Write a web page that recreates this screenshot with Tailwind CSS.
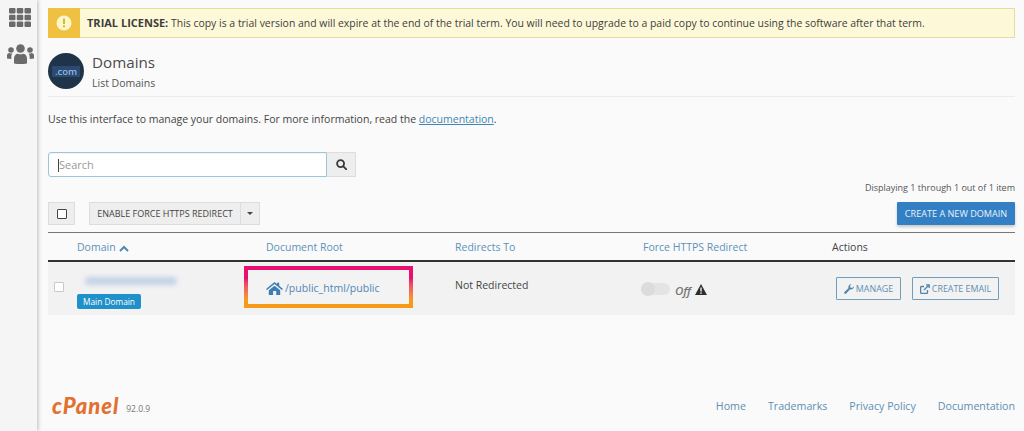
<!DOCTYPE html>
<html><head><meta charset="utf-8"><script src="https://cdn.jsdelivr.net/npm/@tailwindcss/browser@4"></script></head>
<body class="w-[1024px] h-[431px] overflow-hidden bg-[#fafafa] font-['Open_Sans',sans-serif] text-[#444]">
<div class="flex h-[431px]">
  <aside class="w-[37px] shrink-0 bg-[#f5f5f5] shadow-[1px_0_4px_rgba(0,0,0,0.25)] flex flex-col items-center pt-[8px] gap-[17px] pl-[3px]">
    <svg width="22" height="19" viewBox="0 0 22 19" fill="#6b6b6b"><rect x="0" y="0" width="6.500" height="5.500" rx="1"/><rect x="7.750" y="0" width="6.500" height="5.500" rx="1"/><rect x="15.500" y="0" width="6.500" height="5.500" rx="1"/><rect x="0" y="6.750" width="6.500" height="5.500" rx="1"/><rect x="7.750" y="6.750" width="6.500" height="5.500" rx="1"/><rect x="15.500" y="6.750" width="6.500" height="5.500" rx="1"/><rect x="0" y="13.500" width="6.500" height="5.500" rx="1"/><rect x="7.750" y="13.500" width="6.500" height="5.500" rx="1"/><rect x="15.500" y="13.500" width="6.500" height="5.500" rx="1"/></svg>
    <svg width="27" height="20" viewBox="0 0 27 20" fill="#6b6b6b"><circle cx="13.500" cy="4.500" r="4.300"/><circle cx="4" cy="6" r="2.800"/><circle cx="23" cy="6" r="2.800"/><path d="M7 19.500v-5c0-3 2-4.800 4-4.800 1 .8 4 .8 5 0 2 0 4 1.800 4 4.800v5q-6.500 1-13 0z"/><path d="M0 14.500v-3c0-1.500 1-2.500 2.500-2.500 1 .6 2 .6 3 .3-.8 1-1.200 2.500-1.200 4.200v1.500zM27 14.500v-3c0-1.500-1-2.500-2.500-2.500-1 .6-2 .6-3 .3.800 1 1.200 2.500 1.200 4.200v1.500z"/></svg>
  </aside>
  <main class="flex-1 pl-[11px] pr-[9px] pt-[8px] flex flex-col min-w-0">
    <div class="flex h-[30px] bg-[#fdf9d8] border border-[#e6dc9e] w-[967px] shrink-0">
      <div class="w-[32px] bg-[#f0c040] -my-px -ml-px flex items-center justify-center shrink-0">
        <svg width="16" height="16" viewBox="0 0 16 16"><circle cx="8" cy="8" r="7.500" fill="#fdf6c8"/><rect x="7" y="3.500" width="2" height="5.500" fill="#d9b63c"/><rect x="7" y="10.200" width="2" height="2" fill="#d9b63c"/></svg>
      </div>
      <p class="pl-[7px] text-[10.450px] leading-[28px] text-[#3d3d3d] whitespace-nowrap"><b class="font-bold text-[11px]">TRIAL LICENSE:</b> This copy is a trial version and will expire at the end of the trial term. You will need to upgrade to a paid copy to continue using the software after that term.</p>
    </div>
    <div class="flex items-start mt-[15px] h-[44px] border-b border-[#ececec] shrink-0">
      <div class="w-[36px] h-[36px] rounded-full bg-[#1f3349] flex items-center justify-center shrink-0">
        <span class="block px-[3px] bg-[#2c4a70] text-[#8db8e4] text-[9.500px] leading-[11px] font-semibold">.com</span>
      </div>
      <div class="pl-[8px]">
        <h1 class="text-[15.200px] leading-[20px] text-[#4a4a4a] -mt-px">Domains</h1>
        <p class="text-[10.500px] leading-[14px] mt-[4px] text-[#555]">List Domains</p>
      </div>
    </div>
    <p class="text-[10.500px] leading-[16px] mt-[14px] text-[#444] shrink-0">Use this interface to manage your domains. For more information, read the <a class="text-[#3f86b5] underline">documentation</a>.</p>
    <div class="flex mt-[25px] h-[25px] shrink-0">
      <div class="w-[279px] h-full bg-white border border-[#9dc6dc] rounded-l-[3px] flex items-center pl-[9px] pt-[2px] text-[11px] text-[#9a9a9a] shadow-[inset_0_1px_1px_rgba(0,0,0,0.05)]"><span class="w-px h-[13px] bg-[#444]"></span>Search</div>
      <div class="w-[29px] h-full bg-[#eeeeee] border border-[#dddddd] border-l-0 flex items-center justify-center">
        <svg width="11" height="11" viewBox="0 0 12 12" fill="none" stroke="#3a3a3a" stroke-width="2"><circle cx="5" cy="5" r="3.800"/><path d="M8 8l3.300 3.300" stroke-linecap="round"/></svg>
      </div>
    </div>
    <p class="text-right text-[9px] leading-[12px] mt-[5px] text-[#555] shrink-0">Displaying 1 through 1 out of 1 item</p>
    <div class="flex items-center h-[23px] mt-[8px] shrink-0">
      <div class="w-[27px] h-[23px] bg-[#eeeeee] border border-[#dddddd] flex items-center justify-center"><span class="block w-[10px] h-[10px] bg-white border border-[#444] rounded-[1px]"></span></div>
      <div class="ml-[14px] h-[23px] w-[152px] bg-[#eeeeee] border border-[#dddddd] text-[9px] leading-[21px] text-center text-[#444] whitespace-nowrap">ENABLE FORCE HTTPS REDIRECT</div>
      <div class="h-[23px] w-[19px] bg-[#eeeeee] border border-[#dddddd] border-l-0 flex items-center justify-center"><span class="block w-0 h-0 border-x-[3.500px] border-x-transparent border-t-[3.500px] border-t-[#444]"></span></div>
      <div class="ml-auto h-[23px] w-[118px] bg-[#337fc4] text-white/90 text-[9.100px] leading-[23px] text-center rounded-[1px] shadow-[0_2px_3px_rgba(0,0,0,0.2)] whitespace-nowrap">CREATE A NEW DOMAIN</div>
    </div>
    <div class="mt-[7px] pt-[3px] border-t border-[#777] border-b-2 border-b-[#333] h-[30px] grid grid-cols-[29px_189px_189px_188px_189px_183px] items-center text-[10.500px] text-[#5b93b8] shrink-0">
      <span></span>
      <span class="flex items-center gap-[3px]">Domain <svg width="10" height="7" viewBox="0 0 10 7" fill="none" stroke="#4f89b0" stroke-width="2"><path d="M1 6l4-4 4 4"/></svg></span>
      <span>Document Root</span>
      <span>Redirects To</span>
      <span>Force HTTPS Redirect</span>
      <span class="text-[#444]">Actions</span>
    </div>
    <div class="h-[53px] bg-[#f2f2f2] grid grid-cols-[29px_189px_189px_188px_189px_183px] shrink-0">
      <div class="pt-[20px] pl-[6px]"><span class="block w-[10px] h-[10px] bg-white border border-[#c8c8c8] rounded-[1px]"></span></div>
      <div class="pt-[15px]">
        <div class="ml-[8px] w-[92px] h-[8px] rounded-full bg-[#c3d2e6] blur-[2.500px]"></div>
        <span class="block mt-[9px] w-[64px] h-[15px] bg-[#1f90c9] rounded-[2px] text-white text-[8.300px] leading-[15px] text-center whitespace-nowrap">Main Domain</span>
      </div>
      <div class="relative text-[10.550px] text-[#4f86b5]">
        <div class="absolute left-[-22px] top-[4px] w-[169px] h-[42px] bg-gradient-to-b from-[#e8106e] from-30% to-[#f79a17] to-80% p-[4px]"><div class="w-full h-full bg-[#f3f3f3]"></div></div>
        <div class="relative flex items-center gap-[2px] pt-[18px] leading-[16px]">
          <svg width="17" height="13" viewBox="0 0 17 13" fill="#3d7fb5"><path d="M8.500 0l2.500 2V.8h2.200v3L17 7l-1 1.100-7.500-6-7.500 6L0 7zM2.800 8.300l5.700-4.600 5.700 4.600V13h-4V9H7.100v4H2.800z"/></svg>
          <span>/public_html/public</span>
        </div>
      </div>
      <div class="pt-[15px] text-[10.500px] leading-[16px] text-[#444]">Not Redirected</div>
      <div class="flex items-start pt-[21px] -ml-[2px]">
        <span class="relative block w-[29px] h-[12px] rounded-full bg-[#e4e4e4]"><span class="absolute left-0 top-[-1px] block w-[14px] h-[14px] rounded-full bg-[#dcdcdc]"></span></span>
        <i class="ml-[5px] text-[11.500px] leading-[15px] text-[#777] font-semibold">Off</i>
        <svg class="ml-[4px] mt-[1px]" width="12" height="11" viewBox="0 0 12 11"><path d="M6 0l6 11H0z" fill="#2f2f2f"/><rect x="5.300" y="3.500" width="1.400" height="4" fill="#f2f2f2"/><rect x="5.300" y="8.400" width="1.400" height="1.400" fill="#f2f2f2"/></svg>
      </div>
      <div class="flex items-start pt-[15px] pl-[4px]">
        <span class="flex items-center justify-center gap-[2px] w-[65px] h-[23px] border border-[#6f9fbd] rounded-[1px] text-[8.900px] text-[#5c8fb3]">
          <svg width="10" height="10" viewBox="0 0 10 10" fill="#4f86ad"><path d="M9.800 2.300a2.800 2.800 0 0 1-3.700 3L2.200 9.500a1.100 1.100 0 0 1-1.700-1.600l4.100-3.900a2.800 2.800 0 0 1 3-3.800L6 1.800l.4 1.700 1.700.4z"/></svg>MANAGE</span>
        <span class="ml-[11px] flex items-center justify-center gap-[2px] w-[87px] h-[23px] border border-[#6f9fbd] rounded-[1px] text-[8.900px] text-[#5c8fb3] whitespace-nowrap">
          <svg width="10" height="10" viewBox="0 0 10 10" fill="none" stroke="#4f86ad" stroke-width="1.300"><path d="M7.500 6v2.600a.8.8 0 0 1-.8.8H1.400a.8.8 0 0 1-.8-.8V3.300a.8.8 0 0 1 .8-.8H4M4 6l5-5M6 .8h3.200V4"/></svg>CREATE EMAIL</span>
      </div>
    </div>
    <footer class="mt-[77px] flex items-center h-[30px] shrink-0">
      <span class="pl-[4px] font-['Lato',sans-serif] italic font-black text-[22px] tracking-[0.9px] text-[#e2702f] leading-[20px] -mt-[2px]">cPanel</span>
      <span class="ml-[7px] mt-[4px] text-[8.500px] text-[#777]">92.0.9</span>
      <nav class="ml-auto flex gap-[22px] text-[10.650px] text-[#5d8fb3]"><a>Home</a><a>Trademarks</a><a>Privacy Policy</a><a>Documentation</a></nav>
    </footer>
  </main>
</div>
</body></html>
